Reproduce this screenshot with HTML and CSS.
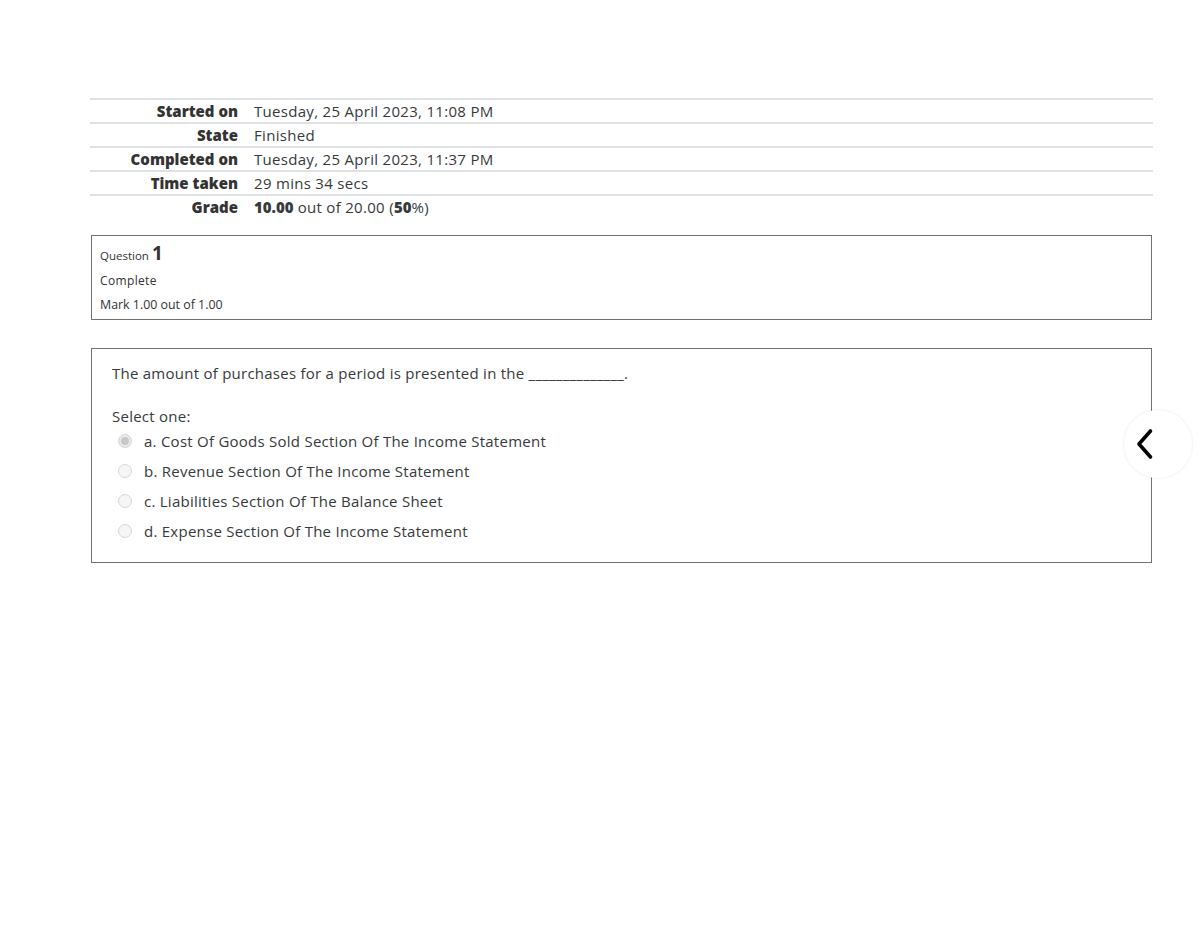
FILE: index.html
```html
<!DOCTYPE html>
<html>
<head>
<meta charset="utf-8">
<link rel="stylesheet" href="styles.css">
</head>
<body>
<div class="page">
  <table class="summary">
    <tr><th>Started on</th><td>Tuesday, 25 April 2023, 11:08 PM</td></tr>
    <tr><th>State</th><td>Finished</td></tr>
    <tr><th>Completed on</th><td>Tuesday, 25 April 2023, 11:37 PM</td></tr>
    <tr><th>Time taken</th><td>29 mins 34 secs</td></tr>
    <tr><th>Grade</th><td><b>10.00</b> out of 20.00 (<b>50</b>%)</td></tr>
  </table>

  <div class="info">
    <div class="qno">Question <span class="num">1</span></div>
    <div class="state">Complete</div>
    <div class="grade">Mark 1.00 out of 1.00</div>
  </div>

  <div class="content">
    <div class="qtext">The amount of purchases for a period is presented in the ______________.</div>
    <div class="prompt">Select one:</div>
    <div class="answers">
      <div class="opt"><span class="radio checked"></span><span>a. Cost Of Goods Sold Section Of The Income Statement</span></div>
      <div class="opt"><span class="radio"></span><span>b. Revenue Section Of The Income Statement</span></div>
      <div class="opt"><span class="radio"></span><span>c. Liabilities Section Of The Balance Sheet</span></div>
      <div class="opt"><span class="radio"></span><span>d. Expense Section Of The Income Statement</span></div>
    </div>
  </div>
</div>
<div class="drawer-toggle">
  <svg width="20" height="32" viewBox="0 0 20 32"><path d="M15.5 3 L4 16 L15.5 29" fill="none" stroke="#000" stroke-width="3.6" stroke-linecap="round" stroke-linejoin="round"/></svg>
</div>
</body>
</html>
```

FILE: styles.css
```css
html, body {
  margin: 0;
  padding: 0;
  background: #fff;
}
body {
  font-family: "Open Sans", "Liberation Sans", sans-serif;
  color: #373a3c;
  width: 1200px;
  height: 926px;
  position: relative;
  overflow: hidden;
}
.page {
  padding: 98px 47px 0 90px;
}
.summary {
  width: 1063px;
  border-collapse: collapse;
  font-size: 15px;
}
.summary tr {
  border-top: 2px solid #dee2e6;
}
.summary th {
  width: 148px;
  text-align: right;
  font-weight: 800;
  color: #333;
  padding: 0 16px 0 0;
  height: 22px;
  line-height: 22px;
  white-space: nowrap;
}
.summary td {
  padding: 0;
  height: 22px;
  line-height: 22px;
  letter-spacing: 0.3px;
}
.summary td b {
  font-weight: 800;
  letter-spacing: 0;
}
.info {
  margin: 17px 0 0 1px;
  width: 1044px;
  border: 1px solid #6f7275;
  padding: 5px 7px 7px 8px;
  height: 71px;
  color: #333;
}
.qno {
  height: 25px;
  line-height: 25px;
  font-size: 11.5px;
}
.qno .num {
  font-size: 19px;
  font-weight: 700;
}
.state {
  font-size: 12px;
  letter-spacing: 0.35px;
  margin-top: 2px;
  height: 24px;
  line-height: 26px;
}
.grade {
  font-size: 12.4px;
  height: 22px;
  line-height: 26px;
}
.content {
  margin: 28px 0 0 1px;
  width: 1019px;
  height: 213px;
  border: 1px solid #6f7275;
  padding: 0 20px 0 20px;
  font-size: 15px;
  letter-spacing: 0.25px;
}
.qtext {
  margin-top: 13px;
  height: 22px;
  line-height: 22px;
}
.prompt {
  margin-top: 21px;
  height: 22px;
  line-height: 22px;
}
.answers {
  display: flex;
  flex-direction: column;
  gap: 8px;
  margin-top: 3px;
  padding-left: 6px;
}
.opt {
  display: flex;
  align-items: center;
  gap: 12px;
  height: 22px;
}
.radio {
  width: 12px;
  height: 12px;
  border-radius: 50%;
  border: 1px solid #d7d7d7;
  background: #f6f6f6;
  flex: none;
}
.radio.checked {
  background: #c8c8c8;
  border-color: #dcdcdc;
  box-shadow: inset 0 0 0 2px #ececec;
}
.drawer-toggle {
  position: absolute;
  left: 1124px;
  top: 410px;
  width: 68px;
  height: 68px;
  border-radius: 50%;
  background: #fff;
  box-shadow: 0 0 2px 1px rgba(0,0,0,0.05);
  display: flex;
  align-items: center;
  justify-content: flex-start;
  padding-left: 11px;
  box-sizing: border-box;
}
```
